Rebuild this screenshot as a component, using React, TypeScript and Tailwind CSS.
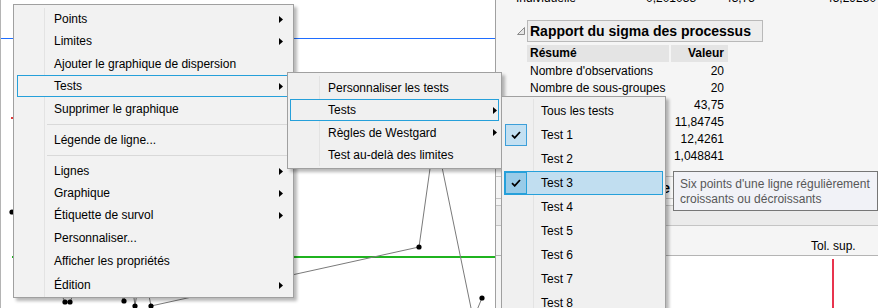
import clsx from 'clsx';

type Row =
  | { sep: true }
  | { sep?: false; label: string; h: string; sub?: boolean; active?: boolean; fill?: boolean; checked?: boolean };

const mainMenu: Row[] = [
  { label: 'Points', h: 'h-[22px]', sub: true },
  { label: 'Limites', h: 'h-[22px]', sub: true },
  { label: 'Ajouter le graphique de dispersion', h: 'h-[23px]' },
  { label: 'Tests', h: 'h-[22px]', sub: true, active: true },
  { label: 'Supprimer le graphique', h: 'h-[23px]' },
  { sep: true },
  { label: 'Légende de ligne...', h: 'h-[22px]' },
  { sep: true },
  { label: 'Lignes', h: 'h-[22px]', sub: true },
  { label: 'Graphique', h: 'h-[22px]', sub: true },
  { label: 'Étiquette de survol', h: 'h-[22px]', sub: true },
  { label: 'Personnaliser...', h: 'h-[23px]' },
  { label: 'Afficher les propriétés', h: 'h-[24px]' },
  { label: 'Édition', h: 'h-[24px]', sub: true },
];

const testsMenu: Row[] = [
  { label: 'Personnaliser les tests', h: 'h-[23px]' },
  { label: 'Tests', h: 'h-[22px]', sub: true, active: true },
  { label: 'Règles de Westgard', h: 'h-[23px]', sub: true },
  { label: 'Test au-delà des limites', h: 'h-[22px]' },
];

const testList: Row[] = [
  { label: 'Tous les tests', h: 'h-[24px]' },
  { label: 'Test 1', h: 'h-[24px]', checked: true },
  { label: 'Test 2', h: 'h-[24px]' },
  { label: 'Test 3', h: 'h-[24px]', checked: true, active: true, fill: true },
  { label: 'Test 4', h: 'h-[24px]' },
  { label: 'Test 5', h: 'h-[24px]' },
  { label: 'Test 6', h: 'h-[24px]' },
  { label: 'Test 7', h: 'h-[24px]' },
  { label: 'Test 8', h: 'h-[24px]' },
];

// summary rows; labels of the last four sit under the open submenu
const summary = [
  ["Nombre d'observations", '20'],
  ['Nombre de sous-groupes', '20'],
  ['', '43,75'],
  ['', '11,84745'],
  ['', '12,4261'],
  ['', '1,048841'],
];

function Arrow({ className }: { className?: string }) {
  return (
    <svg width="4" height="7" viewBox="0 0 4 7" className={className}>
      <path d="M0 0L4 3.5L0 7Z" fill="#000" />
    </svg>
  );
}

function Check({ dark }: { dark?: boolean }) {
  return (
    <div
      className={clsx(
        'flex h-full w-[22px] items-center justify-center border',
        dark ? 'border-[#26a0da] bg-[#98cbe8]' : 'border-[#3d9fd9] bg-[#c3e0f2]'
      )}
    >
      <svg width="10" height="8" viewBox="0 0 10 8">
        <path d="M1 4.2L3.7 6.8L9 1" fill="none" stroke="#000" strokeWidth="1.8" />
      </svg>
    </div>
  );
}

function MenuRows({ rows, gutter, pad, arrowGap }: { rows: Row[]; gutter: string; pad: string; arrowGap: string }) {
  return (
    <>
      {rows.map((r, i) =>
        r.sep ? (
          <div key={i} className="flex h-[9px]">
            <div className={clsx('ml-[1px] border-r border-[#e3e3e3]', gutter)} />
            <div className="ml-[2px] h-px flex-1 self-center bg-[#d9d9d9]" />
          </div>
        ) : (
          <div
            key={i}
            className={clsx(
              'flex items-center border',
              r.h,
              r.active ? 'border-[#26a0da]' : 'border-transparent',
              r.fill && 'bg-[#c1def0]'
            )}
          >
            <div
              className={clsx(
                '-my-[1px] self-stretch border-r',
                gutter,
                r.active ? 'border-transparent' : 'border-[#e3e3e3]',
                r.checked && 'py-[1px]'
              )}
            >
              {r.checked && <Check dark={r.fill} />}
            </div>
            <span className={clsx('whitespace-nowrap', pad)}>{r.label}</span>
            {r.sub && <Arrow className={clsx('ml-auto', arrowGap)} />}
          </div>
        )
      )}
    </>
  );
}

function Chart() {
  return (
    <svg width="496" height="308" viewBox="0 0 496 308" className="block">
      <rect x="0" y="0" width="496" height="308" fill="#fff" />
      <line x1="0.5" y1="0" x2="0.5" y2="308" stroke="#b4b4b4" />
      <line x1="495.5" y1="0" x2="495.5" y2="308" stroke="#a0a0a0" />
      <line x1="1" y1="38.5" x2="495" y2="38.5" stroke="#1f6dff" strokeWidth="1.2" />
      <line x1="12" y1="257" x2="495" y2="257" stroke="#1fb31f" strokeWidth="2" />
      <rect x="11" y="117" width="2" height="2" fill="#e23a3a" />
      <polyline
        points="12,212 40,250 65,302 70,302 96,240 124,301 128,250 135,306 142,260 151,306 419,247 435,133 471,308"
        fill="none"
        stroke="#7a7a7a"
        strokeWidth="1"
      />
      <line x1="482" y1="298" x2="477" y2="310" stroke="#7a7a7a" />
      {[
        [12, 212],
        [65, 302],
        [70, 302],
        [124, 301],
        [135, 306],
        [151, 306],
        [419, 247],
        [482, 298],
      ].map(([x, y], i) => (
        <circle key={i} cx={x} cy={y} r="2.6" fill="#000" />
      ))}
    </svg>
  );
}

export default function App() {
  return (
    <div className="relative flex h-[308px] w-[878px] overflow-hidden bg-[#f5f5f5] font-['Liberation_Sans',Arial,sans-serif] text-[12px] leading-[16px] text-black">
      <Chart />

      {/* report panel */}
      <div className="flex flex-1 flex-col">
        <div className="-mt-[10px] flex h-[16px] whitespace-nowrap">
          <span className="ml-[20px] w-[130px]">Individuelle</span>
          <span className="w-[46px] text-right">0,201038</span>
          <span className="w-[63px] text-right">43,75</span>
          <span className="ml-[71px]">45,29250</span>
        </div>

        <div className="mt-[14px] flex items-center">
          <svg width="8" height="8" viewBox="0 0 8 8" className="ml-[21px]">
            <polygon points="0.5,7.5 7.5,7.5 7.5,0.5" fill="#e6e6e6" stroke="#8a8a8a" />
          </svg>
          <div className="ml-[2px] flex h-[22px] w-[236px] items-center border border-[#b9b9b9] bg-[#ededed] pl-[2px] text-[14px] font-bold">
            Rapport du sigma des processus
          </div>
        </div>

        <div className="ml-[31px] mt-[3px] w-[201px]">
          <div className="flex h-[17px] gap-[2px] font-bold">
            <div className="w-[142px] bg-[#e4e4e4] pl-[3px] leading-[17px]">Résumé</div>
            <div className="flex-1 bg-[#e4e4e4] pr-[4px] text-right leading-[17px]">Valeur</div>
          </div>
          {summary.map(([k, v]) => (
            <div key={v + k} className="flex h-[17px] items-center gap-[2px]">
              <div className="w-[142px] whitespace-nowrap pl-[3px]">{k}</div>
              <div className="flex-1 pr-[4px] text-right">{v}</div>
            </div>
          ))}
        </div>

        <div className="mt-[12px] flex h-[23px] items-center justify-end border-y border-[#c4c4c4] pr-[208px] text-[14px] font-bold">
          e
        </div>
        <div className="mt-[6px] h-[21px] border-y border-[#c4c4c4] bg-[#ebebeb]" />
        <div className="flex h-[30px] items-end border-b border-[#b4b4b4] pb-[1px]">
          <span className="ml-[315px]">Tol. sup.</span>
        </div>
        <div className="ml-[20px] flex-1 bg-white">
          <div className="ml-[316px] mt-[3px] h-full w-[2px] bg-[#e8344e]" />
        </div>
      </div>

      {/* context menus */}
      <div className="absolute left-[13px] top-[4px] w-[281px] border border-[#a0a0a0] bg-[#f2f2f2] pt-[3px] shadow-[3px_3px_3px_rgba(0,0,0,0.28)]">
        <div className="ml-[3px] mr-[5px]">
          <MenuRows rows={mainMenu} gutter="w-[27px]" pad="pl-[9px]" arrowGap="mr-[4px]" />
        </div>
      </div>

      <div className="absolute left-[287px] top-[72px] w-[215px] border border-[#a0a0a0] bg-[#f0f0f0] pb-[2px] pt-[3px] shadow-[3px_3px_3px_rgba(0,0,0,0.28)]">
        <div className="mx-[2px]">
          <MenuRows rows={testsMenu} gutter="w-[29px]" pad="pl-[8px]" arrowGap="mr-[1px]" />
        </div>
      </div>

      <div className="absolute left-[501px] top-[96px] w-[165px] border border-[#a0a0a0] bg-[#f0f0f0] pt-[2px] shadow-[3px_3px_3px_rgba(0,0,0,0.28)]">
        <div className="mx-[2px]">
          <MenuRows rows={testList} gutter="w-[29px]" pad="pl-[7px]" arrowGap="mr-[1px]" />
        </div>
      </div>

      {/* tooltip */}
      <div className="absolute left-[673px] top-[171px] h-[40px] w-[205px] border border-[#767676] bg-[#f1f2f7] px-[6px] pt-[5px] leading-[15px] text-[#575757]">
        <div className="whitespace-nowrap">Six points d'une ligne régulièrement</div>
        <div className="whitespace-nowrap">croissants ou décroissants</div>
      </div>
    </div>
  );
}
